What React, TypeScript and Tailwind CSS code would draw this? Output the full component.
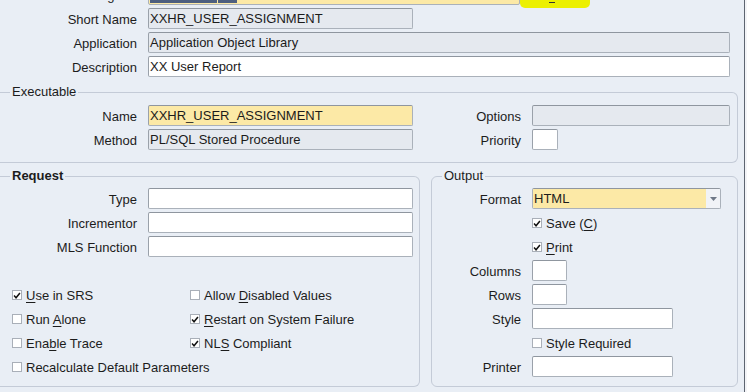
import type { ReactNode } from "react";

type Tone = "white" | "gray" | "yellow";

function Field({ w, tone = "white", children }: { w: string; tone?: Tone; children?: ReactNode }) {
  const bg = tone === "white" ? "bg-white" : tone === "gray" ? "bg-[#e5e9ef]" : "bg-[#fce9a6]";
  return (
    <div
      className={`h-[21px] ${w} ${bg} border border-[#aab1ba] border-t-[#8f969f] border-l-[#9aa1aa] rounded-[2px] flex items-center pl-[1px] pt-[1px] text-[#1b1b1b] overflow-hidden whitespace-nowrap`}
    >
      {children}
    </div>
  );
}

function Row({ label, lw = "w-[137px]", children }: { label: string; lw?: string; children: ReactNode }) {
  return (
    <div className="flex items-center h-[21px]">
      <div className={`${lw} text-right whitespace-nowrap pt-[2px]`}>{label}</div>
      <div className="ml-[11px] flex items-center">{children}</div>
    </div>
  );
}

function Check({ on, children }: { on?: boolean; children: ReactNode }) {
  return (
    <div className="flex items-center h-[21px] whitespace-nowrap pt-[1px]">
      <div className="w-[10px] h-[10px] bg-white border border-[#a9afb8] flex items-center justify-center shrink-0">
        {on && (
          <svg width="9" height="9" viewBox="0 0 9 9">
            <path d="M1.2 4.6 L3.4 7 L7.8 1.6" fill="none" stroke="#111" strokeWidth="1.7" />
          </svg>
        )}
      </div>
      <div className="ml-[4px] pt-[1px]">{children}</div>
    </div>
  );
}

const U = ({ children }: { children: ReactNode }) => <span className="underline underline-offset-2">{children}</span>;

export default function App() {
  return (
    <div className="flex w-[747px] h-[392px] overflow-hidden text-[13px] leading-[16px] text-[#1c1c1c] font-['Liberation_Sans',Arial,sans-serif]">
      <div className="w-[744px] h-full bg-[#e9eef5] overflow-hidden">
        {/* header fields */}
        <div className="flex flex-col gap-[3px] mt-[-16px]">
          <div className="relative">
            <Row label="Program">
              <div className="h-[21px] w-[372px] bg-[#fce9a6] border border-[#aab1ba] rounded-[2px] flex items-stretch pl-[1px] py-[1px]">
                <div className="w-[67px] bg-[#4d5f7f]" />
                <div className="w-[1px]" />
                <div className="w-[19px] bg-[#4d5f7f]" />
              </div>
            </Row>
            <div className="absolute left-[520px] top-[16px] w-[70px] h-[8px] bg-[#ecf000] rounded-b-[5px] flex justify-center pt-[2px]">
              <div className="w-[6px] h-[1px] bg-[#333] ml-[-6px]" />
            </div>
          </div>
          <Row label="Short Name">
            <Field w="w-[265px]" tone="gray">XXHR_USER_ASSIGNMENT</Field>
          </Row>
          <Row label="Application">
            <Field w="w-[582px]" tone="gray">Application Object Library</Field>
          </Row>
          <Row label="Description">
            <Field w="w-[582px]">XX User Report</Field>
          </Row>
        </div>

        {/* Executable */}
        <fieldset className="w-[738px] mt-[7px] border border-l-0 border-[#c4cbd7] rounded-r-[6px] pt-[5px] pb-[12px]">
          <legend className="ml-[10px] px-[2px] leading-[16px]">Executable</legend>
          <div className="flex flex-col gap-[3px]">
            <div className="flex items-center">
              <Row label="Name">
                <Field w="w-[265px]" tone="yellow">XXHR_USER_ASSIGNMENT</Field>
              </Row>
              <Row label="Options" lw="w-[108px]">
                <Field w="w-[198px]" tone="gray" />
              </Row>
            </div>
            <div className="flex items-center">
              <Row label="Method">
                <Field w="w-[265px]" tone="gray">PL/SQL Stored Procedure</Field>
              </Row>
              <Row label="Priority" lw="w-[108px]">
                <Field w="w-[26px]" />
              </Row>
            </div>
          </div>
        </fieldset>

        <div className="flex mt-[5px]">
          {/* Request */}
          <fieldset className="w-[420px] border border-l-0 border-[#c4cbd7] rounded-r-[6px] pt-[4px] pb-[9px]">
            <legend className="ml-[10px] px-[2px] leading-[16px] font-bold">Request</legend>
            <div className="flex flex-col gap-[3px]">
              <Row label="Type">
                <Field w="w-[265px]" />
              </Row>
              <Row label="Incrementor">
                <Field w="w-[265px]" />
              </Row>
              <Row label="MLS Function">
                <Field w="w-[265px]" />
              </Row>
              <div className="h-[21px]" />
              <div className="grid grid-cols-[178px_1fr] gap-y-[3px] pl-[12px]">
                <Check on>
                  <U>U</U>se in SRS
                </Check>
                <Check>
                  Allow <U>D</U>isabled Values
                </Check>
                <Check>
                  Run <U>A</U>lone
                </Check>
                <Check on>
                  <U>R</U>estart on System Failure
                </Check>
                <Check>
                  Ena<U>b</U>le Trace
                </Check>
                <Check on>
                  NL<U>S</U> Compliant
                </Check>
                <Check>Recalculate Default Parameters</Check>
              </div>
            </div>
          </fieldset>

          {/* Output */}
          <fieldset className="w-[307px] ml-[11px] border border-[#c4cbd7] rounded-[6px] pt-[4px] pb-[9px]">
            <legend className="ml-[10px] px-[2px] leading-[16px]">Output</legend>
            <div className="flex flex-col gap-[3px]">
              <Row label="Format" lw="w-[89px]">
                <div className="h-[21px] w-[189px] border border-[#aab1ba] border-t-[#8f969f] rounded-[2px] flex overflow-hidden">
                  <div className="flex-1 bg-[#fce9a6] flex items-center pl-[1px] pt-[1px]">HTML</div>
                  <div className="w-[14px] bg-[#f1f3f7] flex items-center justify-center">
                    <svg width="7" height="4" viewBox="0 0 7 4">
                      <path d="M0 0 L7 0 L3.5 4 Z" fill="#6f7887" />
                    </svg>
                  </div>
                </div>
              </Row>
              <div className="pl-[100px]">
                <Check on>
                  Save (<U>C</U>)
                </Check>
              </div>
              <div className="pl-[100px]">
                <Check on>
                  <U>P</U>rint
                </Check>
              </div>
              <Row label="Columns" lw="w-[89px]">
                <Field w="w-[35px]" />
              </Row>
              <Row label="Rows" lw="w-[89px]">
                <Field w="w-[35px]" />
              </Row>
              <Row label="Style" lw="w-[89px]">
                <Field w="w-[141px]" />
              </Row>
              <div className="pl-[100px]">
                <Check>Style Required</Check>
              </div>
              <Row label="Printer" lw="w-[89px]">
                <Field w="w-[141px]" />
              </Row>
            </div>
          </fieldset>
        </div>
      </div>
      <div className="w-[1px] h-full bg-[#5d6470]" />
      <div className="flex-1 h-full bg-[#f3f4f7]" />
    </div>
  );
}
